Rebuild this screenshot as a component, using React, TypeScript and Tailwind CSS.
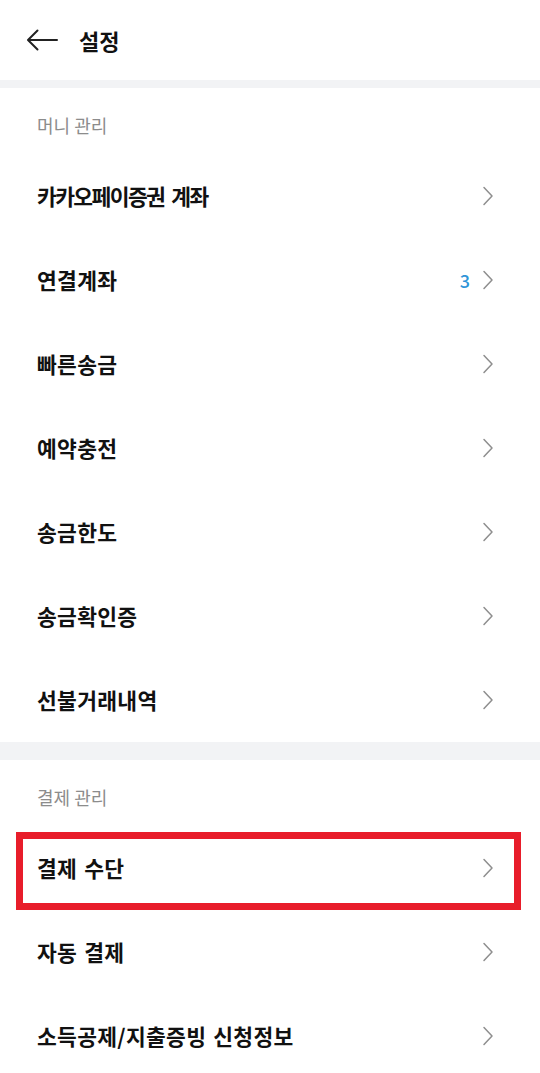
import React from "react";

const Chevron = () => (
  <svg width="12" height="20" viewBox="0 0 12 20" fill="none" className="shrink-0">
    <path d="M2 1.5 L10 10 L2 18.5" stroke="#8e8e8e" strokeWidth="1.5" strokeLinecap="round" strokeLinejoin="round" />
  </svg>
);

const Row = ({
  label,
  badge,
  highlight,
  tight,
}: {
  label: string;
  badge?: string;
  highlight?: boolean;
  tight?: boolean;
}) => {
  const parts = label.split(" ");
  return (
    <div className="relative flex h-[84px] items-center justify-between pl-[37px] pr-[46px]">
      <span
        className={
          tight
            ? "flex text-[21.5px] font-bold text-[#111111] tracking-[-1.6px]"
            : "flex text-[21.5px] font-bold text-[#111111] tracking-[0.3px]"
        }
      >
        {parts.map((p, i) => (
          <span key={i} className={i > 0 ? "ml-[7px]" : ""}>
            {p}
          </span>
        ))}
      </span>
      <div className="flex items-center gap-[12px]">
        {badge && <span className="text-[18px] text-[#2f95d8] font-medium">{badge}</span>}
        <Chevron />
      </div>
      {highlight && (
        <div className="absolute left-[16px] right-[19px] top-[6px] bottom-0 border-[7px] border-[#e81d2a]" />
      )}
    </div>
  );
};

const SectionTitle = ({ title }: { title: string }) => (
  <div className="flex h-[66px] items-end pl-[37px] pb-[15px]">
    <span className="text-[18px] text-[#8c8c8c]">{title}</span>
  </div>
);

export default function App() {
  return (
    <div
      className="w-[540px] min-h-[1073px] bg-white overflow-hidden"
      style={{ fontFamily: '"Noto Sans CJK KR", "Noto Sans", sans-serif' }}
    >
      <div className="flex h-[80px] items-center pl-[26px]">
        <svg width="32" height="22" viewBox="0 0 32 22" fill="none">
          <path d="M31 11 H2.5 M11.5 1.5 L2 11 L11.5 20.5" stroke="#222" strokeWidth="2" strokeLinecap="round" strokeLinejoin="round" />
        </svg>
        <span className="ml-[21px] text-[22px] font-bold text-[#111111]">설정</span>
      </div>
      <div className="h-[8px] bg-[#f2f3f5]" />
      <SectionTitle title="머니 관리" />
      <Row label="카카오페이증권 계좌" tight />
      <Row label="연결계좌" badge="3" />
      <Row label="빠른송금" />
      <Row label="예약충전" />
      <Row label="송금한도" />
      <Row label="송금확인증" />
      <Row label="선불거래내역" />
      <div className="h-[18px] bg-[#f2f3f5]" />
      <SectionTitle title="결제 관리" />
      <Row label="결제 수단" highlight />
      <Row label="자동 결제" />
      <Row label="소득공제/지출증빙 신청정보" />
    </div>
  );
}
